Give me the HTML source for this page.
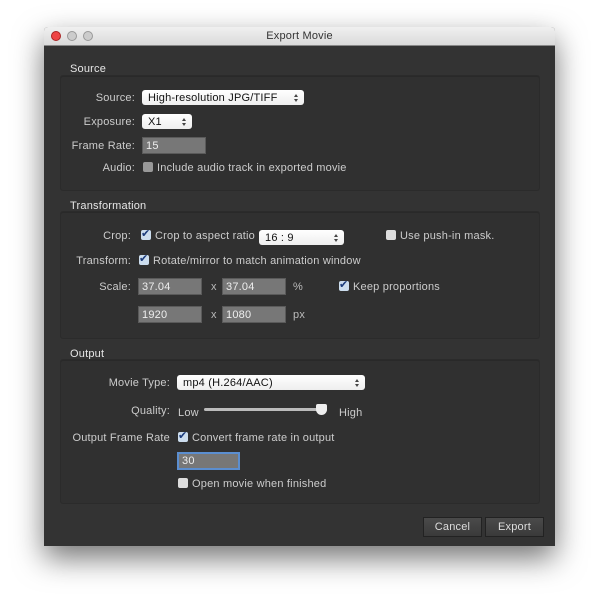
<!DOCTYPE html><html><head><style>
body{margin:0;width:600px;height:609px;background:#fff;position:relative;overflow:hidden;font-family:"Liberation Sans",sans-serif;font-size:11px;color:#ddd;letter-spacing:.2px}
.win{position:absolute;left:44px;top:27px;width:511px;height:519px;background:#333;box-shadow:0 12px 30px rgba(0,0,0,.55);border-radius:4px 4px 0 0;overflow:hidden}
.tb{position:absolute;left:0;top:0;width:511px;height:18px;background:linear-gradient(#f0f0f0,#dadada);border-bottom:1px solid #888;color:#333;text-align:center;line-height:18px;font-size:11px}
.dot{position:absolute;top:4px;width:10px;height:10px;border-radius:50%;background:#ccc;border:1px solid #999;box-sizing:border-box}
.a{position:absolute;white-space:nowrap}
.box{position:absolute;border:1px solid #2b2b2b;background:#303030;border-radius:3px;box-shadow:inset 0 1px 0 #292929}
.h{position:absolute;color:#e6e6e6;font-size:11px}
.lbl{position:absolute;text-align:right;color:#ccc}
.sel{position:absolute;height:15px;background:linear-gradient(#fff,#eee);border-radius:3px;color:#111;line-height:16px;padding-left:6px;box-sizing:border-box}
.sel:after{content:"";position:absolute;right:6px;top:4px;width:0;height:0;border-left:2px solid transparent;border-right:2px solid transparent;border-bottom:3px solid #444}
.sel:before{content:"";position:absolute;right:6px;top:9px;width:0;height:0;border-left:2px solid transparent;border-right:2px solid transparent;border-top:3px solid #444}
.inp{position:absolute;height:17px;background:#777;border:1px solid #5a5a5a;box-sizing:border-box;color:#eee;line-height:16px;padding-left:3px}
.cb{position:absolute;width:10px;height:10px;background:#ddd;border-radius:2px}
.cb.on{background:#cde}
.cb.on:after{content:"✔";position:absolute;left:0;top:-3px;color:#1a3a7a;font-size:11px}
.btn{position:absolute;height:20px;background:linear-gradient(#4a4a4a,#3a3a3a);border:1px solid #222;box-sizing:border-box;color:#ddd;text-align:center;line-height:18px}
</style></head><body>
<div class="win">
<div class="tb">Export Movie</div>
<div class="dot" style="left:7px;background:#e44;border-color:#a22"></div>
<div class="dot" style="left:23px"></div>
<div class="dot" style="left:39px"></div>

<div class="h" style="left:26px;top:36px">Source</div>
<div class="box" style="left:16px;top:48px;width:478px;height:114px"></div>
<div class="lbl" style="left:20px;width:71px;top:65px">Source:</div>
<div class="sel" style="left:98px;top:63px;width:162px">High-resolution JPG/TIFF</div>
<div class="lbl" style="left:20px;width:71px;top:89px">Exposure:</div>
<div class="sel" style="left:98px;top:87px;width:50px">X1</div>
<div class="lbl" style="left:20px;width:71px;top:113px">Frame Rate:</div>
<div class="inp" style="left:98px;top:110px;width:64px">15</div>
<div class="lbl" style="left:20px;width:71px;top:135px">Audio:</div>
<div class="cb" style="left:99px;top:135px;background:#999"></div>
<div class="a" style="left:113px;top:135px;color:#ccc">Include audio track in exported movie</div>

<div class="h" style="left:26px;top:173px">Transformation</div>
<div class="box" style="left:16px;top:184px;width:478px;height:126px"></div>
<div class="lbl" style="left:20px;width:67px;top:203px">Crop:</div>
<div class="cb on" style="left:97px;top:203px"></div>
<div class="a" style="left:111px;top:203px;color:#ccc">Crop to aspect ratio</div>
<div class="sel" style="left:215px;top:203px;width:85px">16 : 9</div>
<div class="cb" style="left:342px;top:203px"></div>
<div class="a" style="left:356px;top:203px;color:#ccc">Use push-in mask.</div>
<div class="lbl" style="left:20px;width:67px;top:228px">Transform:</div>
<div class="cb on" style="left:95px;top:228px"></div>
<div class="a" style="left:109px;top:228px;color:#ccc">Rotate/mirror to match animation window</div>
<div class="lbl" style="left:20px;width:67px;top:254px">Scale:</div>
<div class="inp" style="left:94px;top:251px;width:64px">37.04</div>
<div class="a" style="left:167px;top:254px;color:#bbb">x</div>
<div class="inp" style="left:178px;top:251px;width:64px">37.04</div>
<div class="a" style="left:249px;top:254px;color:#bbb">%</div>
<div class="cb on" style="left:295px;top:254px"></div>
<div class="a" style="left:309px;top:254px;color:#ccc">Keep proportions</div>
<div class="inp" style="left:94px;top:279px;width:64px">1920</div>
<div class="a" style="left:167px;top:282px;color:#bbb">x</div>
<div class="inp" style="left:178px;top:279px;width:64px">1080</div>
<div class="a" style="left:249px;top:282px;color:#bbb">px</div>

<div class="h" style="left:26px;top:321px">Output</div>
<div class="box" style="left:16px;top:332px;width:478px;height:143px"></div>
<div class="lbl" style="left:20px;width:106px;top:350px">Movie Type:</div>
<div class="sel" style="left:133px;top:348px;width:188px">mp4 (H.264/AAC)</div>
<div class="lbl" style="left:20px;width:106px;top:378px">Quality:</div>
<div class="a" style="left:134px;top:380px;color:#ccc">Low</div>
<div class="a" style="left:160px;top:381px;width:123px;height:3px;background:#bbb;border-radius:2px"></div>
<div class="a" style="left:272px;top:377px;width:11px;height:11px;background:#eee;border-radius:2px 2px 6px 6px"></div>
<div class="a" style="left:295px;top:380px;color:#ccc">High</div>
<div class="lbl" style="left:20px;width:106px;top:405px">Output Frame Rate</div>
<div class="cb on" style="left:134px;top:405px"></div>
<div class="a" style="left:148px;top:405px;color:#ccc">Convert frame rate in output</div>
<div class="inp" style="left:133px;top:425px;width:63px;height:18px;border:2px solid #5b8ed0;line-height:15px">30</div>
<div class="cb" style="left:134px;top:451px"></div>
<div class="a" style="left:148px;top:451px;color:#ccc">Open movie when finished</div>

<div class="btn" style="left:379px;top:490px;width:59px">Cancel</div>
<div class="btn" style="left:441px;top:490px;width:59px">Export</div>
</div>
</body></html>
